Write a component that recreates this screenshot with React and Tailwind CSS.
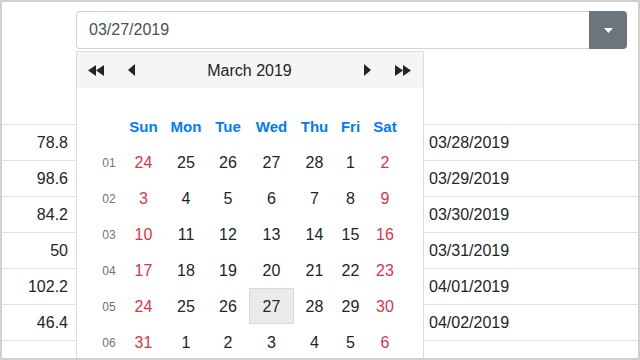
const rows = [
  { value: "78.8", date: "03/28/2019" },
  { value: "98.6", date: "03/29/2019" },
  { value: "84.2", date: "03/30/2019" },
  { value: "50", date: "03/31/2019" },
  { value: "102.2", date: "04/01/2019" },
  { value: "46.4", date: "04/02/2019" },
  { value: "", date: "" },
];

const weeks = [
  ["01", [24, 25, 26, 27, 28, 1, 2]],
  ["02", [3, 4, 5, 6, 7, 8, 9]],
  ["03", [10, 11, 12, 13, 14, 15, 16]],
  ["04", [17, 18, 19, 20, 21, 22, 23]],
  ["05", [24, 25, 26, 27, 28, 29, 30]],
  ["06", [31, 1, 2, 3, 4, 5, 6]],
];

const dayNames = ["Sun", "Mon", "Tue", "Wed", "Thu", "Fri", "Sat"];

const Tri = ({ dir, double }) => {
  const w = double ? 16 : 7;
  let pts;
  if (dir === "left") {
    pts = double
      ? ["8,0 0,5.5 8,11", "16,0 8,5.5 16,11"]
      : ["7,0 0,6 7,12"];
  } else {
    pts = double
      ? ["0,0 8,5.5 0,11", "8,0 16,5.5 8,11"]
      : ["0,0 7,6 0,12"];
  }
  return (
    <svg width={w} height={double ? 11 : 12} viewBox={`0 0 ${w} ${double ? 11 : 12}`}>
      {pts.map((p, i) => (
        <polygon key={i} points={p} fill="#212529" />
      ))}
    </svg>
  );
};

function Calendar() {
  return (
    <div className="absolute left-[74px] top-[49px] w-[348px] h-[330px] bg-white border border-[#dddddd]">
      <div className="h-9 bg-[#f5f5f5] flex items-center pl-[11px] pr-[12px]">
        <Tri dir="left" double />
        <div className="ml-[24px]">
          <Tri dir="left" />
        </div>
        <div className="flex-1 text-center text-[16px] text-[#212529] pt-[1px]">March 2019</div>
        <div className="mr-[24px]">
          <Tri dir="right" />
        </div>
        <Tri dir="right" double />
      </div>
      <div className="pt-[20px] pl-[19px]">
        <div className="grid grid-cols-[26px_43px_42px_42px_45px_41px_31px_38px] auto-rows-[36px]">
          <div />
          {dayNames.map((d) => (
            <div key={d} className="flex items-center justify-center text-[15px] font-bold text-[#007bff] pt-[2px]">
              {d}
            </div>
          ))}
          {weeks.map(([wk, days]) => [
            <div key={wk} className="flex items-center justify-center text-[12px] text-[#6c757d] pt-[2px]">
              {wk}
            </div>,
            ...days.map((d, i) => {
              const weekend = i === 0 || i === 6;
              const selected = wk === "05" && i === 3;
              return (
                <div
                  key={wk + "-" + i}
                  className={
                    "flex items-center justify-center text-[16px] pt-[1px] " +
                    (weekend ? "text-[#dc3545] " : "text-[#212529] ") +
                    (selected ? "bg-[#eaeaea] border border-[#dadada]" : "")
                  }
                >
                  {d}
                </div>
              );
            }),
          ])}
        </div>
      </div>
    </div>
  );
}

export default function App() {
  return (
    <div
      className="relative w-[640px] h-[360px] overflow-hidden bg-white border-2 border-[#d0d0d0] text-[#212529]"
      style={{ fontFamily: '"Liberation Sans", Arial, sans-serif' }}
    >
      <div className="ml-[74px] mt-[9px] w-[551px] h-[38px] flex">
        <div className="flex-1 flex items-center pl-[12px] border border-r-0 border-[#ced4da] rounded-l-[4px] text-[16px] text-[#495057]">
          03/27/2019
        </div>
        <div className="w-[38px] bg-[#6c757d] rounded-r-[4px] flex items-center justify-center">
          <svg width="9" height="5" viewBox="0 0 9 5">
            <polygon points="0,0 9,0 4.5,5" fill="#ffffff" />
          </svg>
        </div>
      </div>

      <div className="mt-[75px]">
        {rows.map((r, i) => (
          <div key={i} className="flex h-9 border-t border-[#dee2e6] text-[16px]">
            <div className="w-[74px] pr-[8px] flex items-center justify-end">{r.value}</div>
            <div className="w-[348px]" />
            <div className="flex-1 pl-[5px] flex items-center">{r.date}</div>
          </div>
        ))}
      </div>

      <Calendar />
    </div>
  );
}
